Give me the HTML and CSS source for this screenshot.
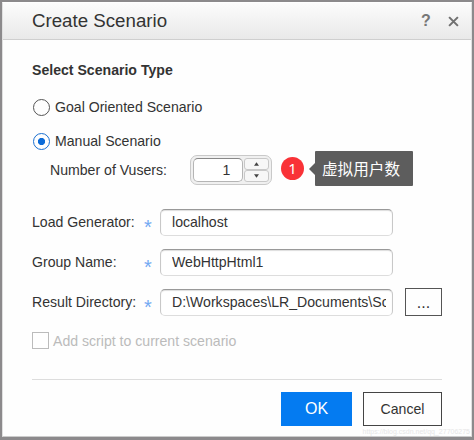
FILE: index.html
```html
<!DOCTYPE html>
<html lang="en">
<head>
<meta charset="utf-8">
<title>Create Scenario</title>
<link rel="stylesheet" href="styles.css">
</head>
<body>
<main class="dialog">
  <header class="header">
    <h1 class="title">Create Scenario</h1>
    <span class="help">?</span>
    <svg class="close" viewBox="0 0 12 12"><path d="M1.2 1.2 10.8 10.8M10.8 1.2 1.2 10.8"/></svg>
  </header>
  <div class="content">
    <h2 class="section">Select Scenario Type</h2>
    <div class="choice"><span class="radio"></span><span class="goal">Goal Oriented Scenario</span></div>
    <div class="choice manual"><span class="radio checked"></span><span class="manual-text">Manual Scenario</span></div>
    <div class="users">
      <span class="users-label">Number of Vusers:</span>
      <div class="spinner">
        <span class="count">1</span>
        <span class="steps">
          <span class="step"><svg viewBox="0 0 6 4"><path d="M0 4 3 0 6 4z"/></svg></span>
          <span class="step"><svg viewBox="0 0 6 4"><path d="M0 0 3 4 6 0z"/></svg></span>
        </span>
      </div>
      <span class="badge">1</span>
      <span class="tip">虚拟用户数</span>
    </div>
    <div class="field"><span class="label">Load Generator:</span><span class="star">*</span><div class="input"><span>localhost</span></div></div>
    <div class="field"><span class="label">Group Name:</span><span class="star">*</span><div class="input"><span>WebHttpHtml1</span></div></div>
    <div class="field"><span class="label">Result Directory:</span><span class="star">*</span><div class="input"><span>D:\Workspaces\LR_Documents\Sc</span></div><span class="browse">...</span></div>
    <div class="add"><span class="checkbox"></span><span class="add-text">Add script to current scenario</span></div>
    <footer class="footer"><span class="ok">OK</span><span class="cancel">Cancel</span></footer>
  </div>
  <span class="watermark">https://blog.csdn.net/qq_27706275</span>
</main>
</body>
</html>
```
FILE: styles.css
```css
* { box-sizing: border-box; }
body {
  margin: 0;
  width: 474px;
  height: 440px;
  padding: 2px 2px 3px;
  background: #8c8a8c;
  overflow: hidden;
  font-family: "Liberation Sans", "Noto Sans CJK SC", sans-serif;
  font-size: 14.1px;
  color: #333;
  white-space: nowrap;
}
.dialog { position: relative; height: 435px; background: #fefefe; border: 1px solid #e0e0e0; border-top-color: #fff; border-bottom-color: #ccc; }
.header {
  display: flex;
  align-items: center;
  height: 37px;
  padding: 0 12px 0 29px;
  background: linear-gradient(#fcfcfc, #e9e9e9);
  border-bottom: 1px solid #cfcfcf;
}
.title { flex: 1; margin: 0; font-size: 18.7px; font-weight: 400; line-height: 36px; }
.help { width: 27px; font-size: 16px; font-weight: 700; color: #777; }
.close { width: 11px; height: 11px; fill: none; stroke: #707070; stroke-width: 2.2; }
.content { padding: 0 29px; }
.section { margin: 20px 0 0; height: 20px; line-height: 20px; font-size: 14.1px; font-weight: 700; }
.choice { display: flex; align-items: center; height: 20px; margin-top: 17px; gap: 5.5px; }
.manual { margin-top: 14px; }
.radio { width: 17px; height: 17px; margin-left: 0.5px; border: 1px solid #555; border-radius: 50%; }
.checked { border-color: #1a6fd0; background: radial-gradient(circle, #0b6bd8 3.2px, transparent 4px); }
.users { display: flex; align-items: center; height: 40px; margin-top: -1px; padding-left: 18px; }
.users-label { width: 140px; }
.spinner { display: flex; gap: 1px; width: 82px; height: 30px; padding: 2px; border: 1px solid #c9c9c9; border-radius: 7px; background: #f0f0f0; }
.count { width: 51px; height: 24px; border: 1px solid #b5b5b5; border-top-color: #888; border-radius: 5px; background: #fff; text-align: right; line-height: 23px; padding-right: 12px; }
.steps { width: 25px; }
.step { display: flex; align-items: center; justify-content: center; height: 12px; border: 1px solid #c8c8c8; border-radius: 3px; background: #f7f7f7; }
.step svg { width: 5px; height: 4px; fill: #444; }
.badge { width: 23px; height: 23px; margin: -3px 0 0 9px; border-radius: 50%; background: #f93237; color: #fff; text-align: center; font: 15px/22px "Noto Sans", sans-serif; }
.tip { position: relative; width: 98px; height: 35px; margin: -3px 0 0 11px; border-radius: 1px; background: #5d5d5d; color: #fff; font: 15.6px/34px "Noto Sans CJK SC", sans-serif; text-align: center; padding-right: 6px; }
.tip::before { content: ""; position: absolute; left: -6px; top: 12px; border: 6px solid transparent; border-left: 0; border-right-color: #5d5d5d; }
.field { display: flex; align-items: center; height: 28px; margin-bottom: 12px; }
.users + .field { margin-top: 18px; }
.label { flex: none; width: 112px; margin-top: -1px; }
.star { flex: none; width: 16px; font-size: 20px; line-height: 20px; color: #73a9f2; padding-top: 9px; }
.input { flex: none; width: 233px; height: 27px; padding: 0 6px 0 11px; line-height: 24px; border: 1px solid #c8c8c8; border-top: 1px solid #999; border-bottom-color: #ddd; border-radius: 5px; background: #fff; box-shadow: inset 0 1px 1px #ddd; }
.input span { display: block; overflow: hidden; }
.browse { flex: none; width: 37px; height: 28px; margin-left: 12px; border: 1px solid #555; text-align: center; line-height: 27px; font-size: 16px; }
.add { display: flex; align-items: center; height: 20px; margin-top: 14px; color: #bbb; gap: 4px; }
.checkbox { width: 17px; height: 17px; border: 1px solid #bbb; }
.add-text { padding-top: 1px; }
.footer { display: flex; justify-content: flex-end; gap: 11px; margin-top: 29px; padding-top: 12px; border-top: 1px solid #ddd; }
.ok, .cancel { height: 34px; text-align: center; line-height: 34px; }
.ok { width: 71px; background: #047bf1; color: #fff; font-size: 16px; }
.cancel { width: 79px; border: 1px solid #444; line-height: 32px; }
.watermark { position: absolute; right: 1px; bottom: 1px; font-size: 7px; color: #e6e6e6; }
```
